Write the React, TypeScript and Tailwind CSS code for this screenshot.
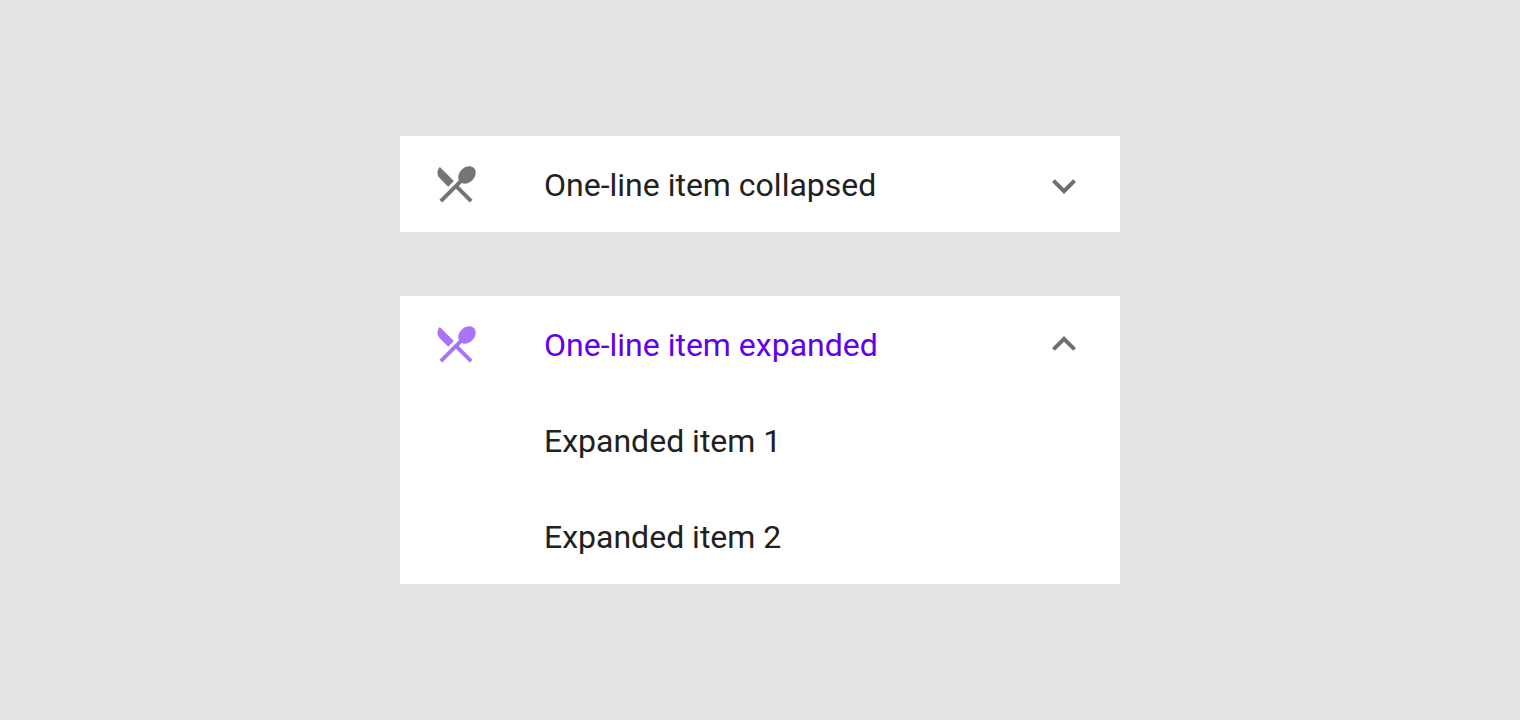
import { useState } from "react";

function RestaurantIcon({ className }: { className: string }) {
  return (
    <svg viewBox="0 0 24 24" className={`size-12 shrink-0 fill-current ${className}`} aria-hidden="true">
      <path d="M8.1 13.34l2.83-2.83L3.91 3.5c-1.56 1.56-1.56 4.09 0 5.66l4.19 4.18zm6.78-1.81c1.53.71 3.68.21 5.27-1.38 1.91-1.91 2.28-4.65.81-6.12-1.46-1.46-4.2-1.1-6.12.81-1.59 1.59-2.09 3.74-1.38 5.27L3.7 19.87l1.41 1.41L12 14.41l6.88 6.88 1.41-1.41L13.41 13l1.47-1.47z" />
    </svg>
  );
}

function Chevron({ up }: { up: boolean }) {
  return (
    <svg viewBox="0 0 24 24" className="size-12 shrink-0 fill-[#6f6f6f]" aria-hidden="true">
      {up ? (
        <path d="M12 8l-6 6 1.41 1.41L12 10.83l4.59 4.58L18 14z" />
      ) : (
        <path d="M16.59 9.59L12 14.17 7.41 9.59 6 11l6 6 6-6z" />
      )}
    </svg>
  );
}

type ListItemProps = { label: string; defaultOpen?: boolean; items?: string[] };

function ListItem({ label, defaultOpen = false, items = [] }: ListItemProps) {
  const [open, setOpen] = useState(defaultOpen);
  return (
    <section className="bg-white">
      <button
        type="button"
        aria-expanded={open}
        onClick={() => setOpen(!open)}
        className="flex h-24 w-full cursor-pointer items-center px-8 text-left"
      >
        <RestaurantIcon className={open ? "text-[#a974f8]" : "text-[#757575]"} />
        <span className={`ml-16 grow pt-0.5 ${open ? "text-[#6200ee]" : "text-[#212121]"}`}>{label}</span>
        <Chevron up={open} />
      </button>
      {open && (
        <ul>
          {items.map((item) => (
            <li key={item} className="flex h-24 items-center pt-0.5 pr-8 pl-36">
              {item}
            </li>
          ))}
        </ul>
      )}
    </section>
  );
}

export default function App() {
  return (
    <main className="flex min-h-screen flex-col items-center justify-center bg-[#e4e4e4] font-['Roboto',sans-serif] text-[32px] leading-12 text-[#212121]">
      <div className="flex w-full max-w-[720px] flex-col gap-16">
        <ListItem label="One-line item collapsed" />
        <ListItem label="One-line item expanded" defaultOpen items={["Expanded item 1", "Expanded item 2"]} />
      </div>
    </main>
  );
}
